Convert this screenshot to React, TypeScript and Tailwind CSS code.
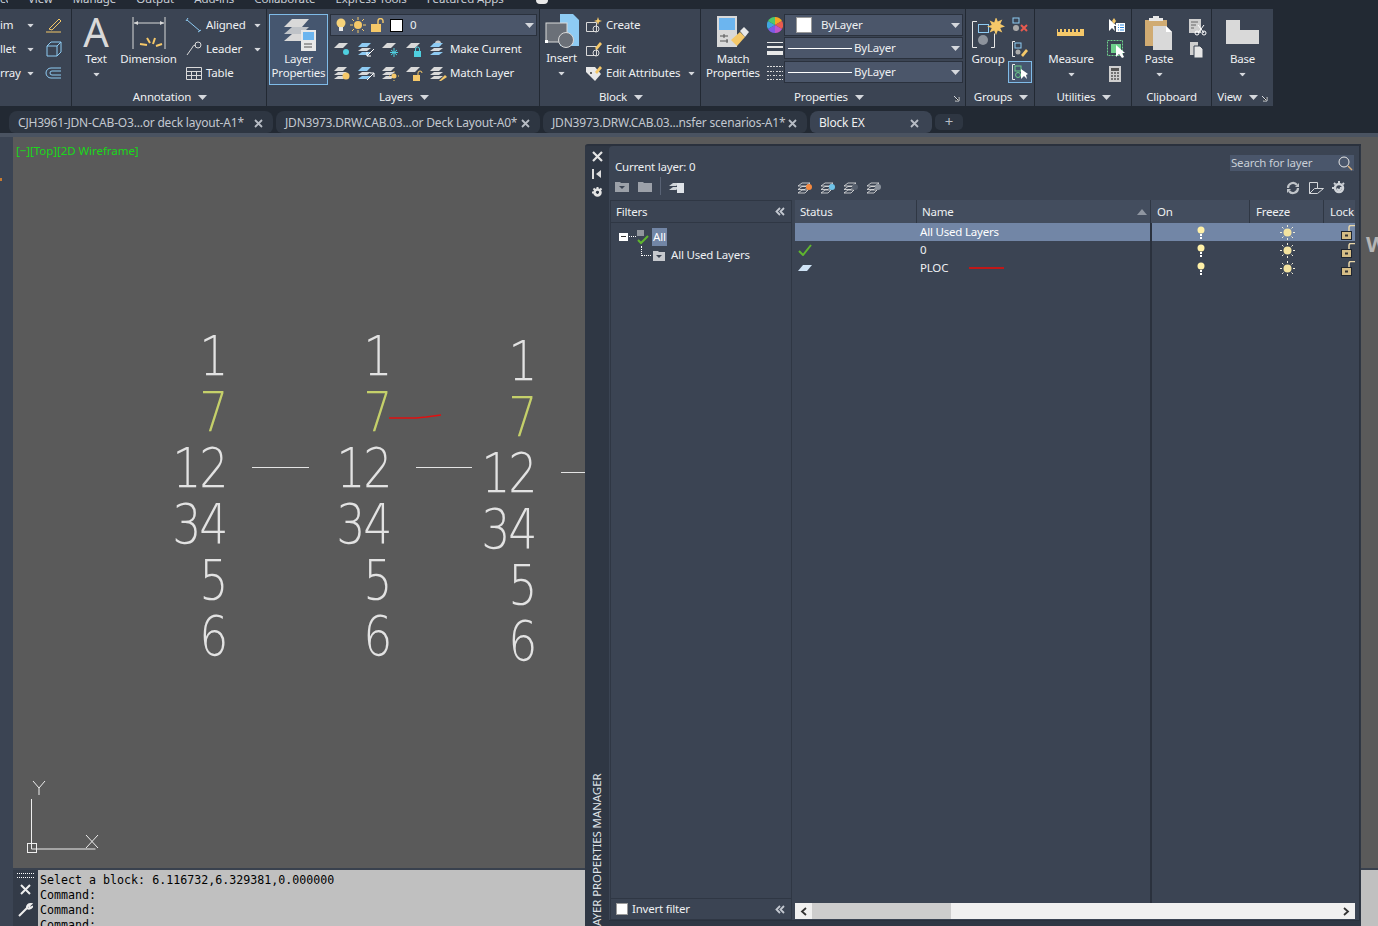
import React from "react";

const Caret = ({ className = "" }: { className?: string }) => (
  <svg width="9" height="5" viewBox="0 0 9 5" className={"shrink-0 " + className}><path d="M0 0h9L4.5 5z" fill="#d5d8dd" /></svg>
);

const Ico = ({ w = 18, h = 18, children, className = "" }: { w?: number; h?: number; children: React.ReactNode; className?: string }) => (
  <svg width={w} height={h} viewBox={`0 0 ${w} ${h}`} className={"shrink-0 " + className} fill="none">{children}</svg>
);

const LayerStack = ({ top = "#d9d9d9", mid = "#d9d9d9" }: { top?: string; mid?: string }) => (
  <>
    <path d="M1 7 5 3h9l-4 4z" fill={top} />
    <path d="M1 11 5 8h9l-4 3z" fill={mid} />
    <path d="M1 15 5 12h9l-4 3z" fill={top} />
  </>
);
const LayerOne = () => <path d="M1 8 6 3h9l-5 5z" fill="#d9d9d9" />;

const Label = ({ children, className = "" }: { children: React.ReactNode; className?: string }) => (
  <span className={"text-[11.5px] tracking-[-0.2px] leading-[14px] text-[#eef0f2] whitespace-nowrap " + className}>{children}</span>
);

const Panel = ({ w, title, tail, titleClass = "pl-[2px]", children }: { w: string; title: React.ReactNode; tail?: boolean; titleClass?: string; children: React.ReactNode }) => (
  <section className={"flex flex-col h-full bg-[#3b4453] shrink-0 " + w}>
    <div className="flex h-[79px] pt-[4px]">{children}</div>
    <div className={"flex-1 flex items-center justify-center gap-[7px] relative " + titleClass}>
      {title}
      {tail && (
        <svg width="7" height="7" viewBox="0 0 7 7" className="absolute right-[5px] top-[7px]"><path d="M1 1l4 4M6 2v4H2" stroke="#d5d8dd" /></svg>
      )}
    </div>
  </section>
);

const Row = ({ children, className = "" }: { children: React.ReactNode; className?: string }) => (
  <div className={"flex items-center h-6 " + className}>{children}</div>
);

const Combo = ({ children, className = "" }: { children: React.ReactNode; className?: string }) => (
  <div className={"flex items-center bg-[#4b566a] border border-[#2a313d] relative " + className}>
    {children}
    <Caret className="absolute right-[2px] top-[8px]" />
  </div>
);

const Bulb = () => (
  <Ico w={10} h={15}><circle cx="5" cy="5" r="4.500" fill="#f6d27a" /><rect x="3" y="9" width="4" height="4" fill="#e8e8e8" /></Ico>
);
const Sun = () => (
  <Ico w={16} h={16}><circle cx="8" cy="8" r="4" fill="#f5c869" /><path d="M8 0v3M8 13v3M0 8h3M13 8h3M2 2l2 2M12 12l2 2M14 2l-2 2M4 12l-2 2" stroke="#f5c869" /></Ico>
);
const OpenLock = () => (
  <Ico w={15} h={14}><rect x="1" y="6" width="10" height="8" fill="#f5c869" /><path d="M8 6V3a2 2 0 0 1 5 0v2" stroke="#f5c869" strokeWidth="1.400" /></Ico>
);

const MenuBar = () => (
  <div className="h-[9px] overflow-hidden bg-[#222933] relative">
    <div className="flex gap-5 -mt-[8px] text-[11.5px] tracking-[-0.1px] leading-[14px] text-[#c9ced6] whitespace-nowrap">
      <span className="w-2 overflow-hidden">ce</span>
      {["View", "Manage", "Output", "Add-ins", "Collaborate", "Express Tools", "Featured Apps"].map((m) => (
        <span key={m}>{m}</span>
      ))}
      <span className="w-[12px] h-[12px] rounded-sm bg-[#e9e9e9] ml-[12px]" />
    </div>
  </div>
);

const Ribbon = () => (
  <div className="flex gap-px h-[97px] w-[1273px]">
    <Panel w="w-[71px]" title={null}>
      <div className="flex flex-col">
        {[
          ["im", "M1 16h15M4 13 14 3l2 2-9 9z", "#f5c869"],
          ["llet", "M2 6h10v10H2zM2 6l4-4h10v10l-4 4M12 6l4-4", "#8ecbf3"],
          ["rray", "M16 4H6a4.500 4.500 0 0 0 0 10h10M16 7H7a2 2 0 0 0 0 4h9", "#8ecbf3"],
        ].map(([t, d, c]) => (
          <Row key={t}>
            <Label className="w-[26px]">{t}</Label>
            <Caret className="scale-75" />
            <Ico className="ml-[10px]"><path d={d} stroke={c} /></Ico>
          </Row>
        ))}
      </div>
    </Panel>

    <Panel w="w-[194px]" title={<><Label>Annotation</Label><Caret /></>}>
      <div className="w-[46px] flex flex-col items-center ml-[1px]">
        <span className="text-[40px] leading-[38px] h-[36px] text-[#d9d9d9] font-['Noto_Sans']">A</span>
        <Label className="mt-[3px]">Text</Label>
        <Caret className="scale-75 mt-[6px]" />
      </div>
      <div className="w-[57px] flex flex-col items-center ml-[1px]">
        <Ico w={34} h={34} className="mt-[4px]">
          <path d="M1 0v32M33 0v32M2 6h30" stroke="#d9d9d9" />
          <path d="M2 6l4-2v4zM32 6l-4-2v4z" fill="#d9d9d9" />
          <path d="M15 28l-7-1M18 26l-3-5M21 27l2-6M24 29l6-2" stroke="#f5c869" strokeWidth="2" />
        </Ico>
        <Label className="mt-[1px]">Dimension</Label>
      </div>
      <div className="flex flex-col ml-[8px]">
        <Row>
          <Ico><path d="M2 4 15 15M1 5l2-3M13 16l3-2" stroke="#8ecbf3" /></Ico>
          <Label className="ml-[3px] w-[47px]">Aligned</Label><Caret className="scale-75" />
        </Row>
        <Row>
          <Ico><path d="M2 15l5-7a4 4 0 0 1 4-3" stroke="#d9d9d9" /><circle cx="13" cy="5" r="3" stroke="#d9d9d9" /></Ico>
          <Label className="ml-[3px] w-[47px]">Leader</Label><Caret className="scale-75" />
        </Row>
        <Row>
          <Ico><path d="M1.500 3.500h15v12h-15zM1.500 7.500h15M1.500 11.500h15M6.500 7v8M11.500 7v8" stroke="#d9d9d9" /></Ico>
          <Label className="ml-[3px]">Table</Label>
        </Row>
      </div>
    </Panel>

    <Panel w="w-[272px]" title={<><Label>Layers</Label><Caret /></>}>
      <div className="ml-[2px] mt-[1px] w-[59px] h-[71px] bg-[#45566f] border border-[#7fbbe8] flex flex-col items-center">
        <Ico w={34} h={34} className="mt-[2px]">
          <path d="M2 10 10 2h17l-7 8z" fill="#d9d9d9" />
          <path d="M2 17l8-7h17l-7 7z" fill="#bfc3c8" />
          <path d="M2 24l8-7h17l-7 7z" fill="#d9d9d9" />
          <rect x="19" y="13" width="15" height="21" fill="#e8e8e8" />
          <rect x="21" y="15" width="11" height="8" fill="#6cb5ef" />
          <path d="M22 27h8M22 30h8" stroke="#555" />
        </Ico>
        <Label className="mt-[1px]">Layer</Label>
        <Label>Properties</Label>
      </div>
      <div className="ml-[2px] flex flex-col">
        <Combo className="w-[207px] h-[22px] mt-[1px] gap-[4px] pl-[5px]">
          <Bulb /><Sun /><OpenLock />
          <span className="w-[13px] h-[13px] bg-white border border-black ml-[1px]" />
          <Label className="ml-[3px]">0</Label>
        </Combo>
        <div className="flex mt-[1px]">
          <div className="flex flex-col">
            <Row className="gap-[6px] pl-[3px]">
              <Ico><LayerOne /><circle cx="13" cy="12" r="3" fill="#4fd0e0" /></Ico>
              <Ico><LayerStack top="#8ecbf3" /><path d="M17 9l-7 7m0-4v4h4" stroke="#fff" /></Ico>
              <Ico><LayerOne /><path d="M13 8v9M9 12.500h8M10 10l6 5M16 10l-6 5" stroke="#4fd0e0" /></Ico>
              <Ico><LayerOne /><rect x="9" y="11" width="7" height="6" fill="#4fd0e0" /><path d="M10.500 11V9a2 2 0 0 1 4 0v2" stroke="#4fd0e0" /></Ico>
            </Row>
            <Row className="gap-[6px] pl-[3px]">
              <Ico><LayerStack /><circle cx="13" cy="12" r="3.500" fill="#f5c869" /></Ico>
              <Ico><LayerStack top="#8ecbf3" /><path d="M10 16l7-7m0 4V9h-4" stroke="#fff" /></Ico>
              <Ico><LayerStack /><circle cx="13" cy="12" r="2.500" fill="#f5c869" /><path d="M13 7v1M13 16v1M8 12h1M17 12h1" stroke="#f5c869" /></Ico>
              <Ico><LayerOne /><rect x="8" y="11" width="7" height="6" fill="#f5c869" /><path d="M13 11V9a2 2 0 0 1 4 0" stroke="#f5c869" /></Ico>
            </Row>
          </div>
          <div className="flex flex-col ml-[6px]">
            <Row>
              <Ico><circle cx="9" cy="3.500" r="3" fill="#c8c8c8" /><LayerStack top="#8ecbf3" /></Ico>
              <Label className="ml-[3px]">Make Current</Label>
            </Row>
            <Row>
              <Ico><LayerStack /><path d="M10 17l6-6 2 2-6 4z" fill="#f5c869" /></Ico>
              <Label className="ml-[3px]">Match Layer</Label>
            </Row>
          </div>
        </div>
      </div>
    </Panel>

    <Panel w="w-[160px]" title={<><Label>Block</Label><Caret /></>}>
      <div className="w-[35px] ml-[4px] flex flex-col items-center">
        <Ico w={34} h={36} className="mt-[1px]">
          <path d="M15 0h13l6 6v26H15z" fill="#8ecbf3" />
          <rect x="1" y="9" width="21" height="19" fill="#6b7078" stroke="#d9d9d9" />
          <circle cx="21" cy="26" r="7.500" fill="#6b7078" stroke="#d9d9d9" />
          <rect x="0" y="26" width="3" height="3" fill="#fff" />
        </Ico>
        <Label className="mt-[1px]">Insert</Label>
        <Caret className="scale-75 mt-[6px]" />
      </div>
      <div className="flex flex-col ml-[6px]">
        <Row>
          <Ico><path d="M1.500 6.500h10v9h-10z" stroke="#d9d9d9" /><circle cx="11" cy="13" r="3" stroke="#d9d9d9" /><path d="M13 1l1 3 3 1-3 1-1 3-1-3-3-1 3-1z" fill="#f5c869" /></Ico>
          <Label className="ml-[3px]">Create</Label>
        </Row>
        <Row>
          <Ico><path d="M1.500 6.500h10v9h-10z" stroke="#d9d9d9" /><circle cx="11" cy="13" r="3" stroke="#d9d9d9" /><path d="M10 8l5-6 2 2-5 6z" fill="#f5c869" /></Ico>
          <Label className="ml-[3px]">Edit</Label>
        </Row>
        <Row>
          <Ico><path d="M1 3h9l6 7-6 7-9-9z" fill="#e8e8e8" /><path d="M10 8l5-6 2 2-5 6z" fill="#f5c869" /><circle cx="6" cy="9" r="1" fill="#333" /></Ico>
          <Label className="ml-[3px] w-[81px]">Edit Attributes</Label><Caret className="scale-75" />
        </Row>
      </div>
    </Panel>

    <Panel w="w-[264px]" tail titleClass="pr-[8px]" title={<><Label>Properties</Label><Caret /></>}>
      <div className="w-[56px] ml-[4px] flex flex-col items-center">
        <Ico w={34} h={35} className="mt-[2px]">
          <rect x="1" y="1" width="20" height="31" fill="#d9d9d9" />
          <rect x="3" y="3" width="16" height="12" fill="#6cb5ef" />
          <path d="M4 21h8M8 19v4M4 26h8M11 24v4" stroke="#555" />
          <path d="M15 25l9-8 5 5-8 9z" fill="#f5c869" />
          <path d="M24 16l4-4 5 5-4 5z" fill="#e8e8e8" />
        </Ico>
        <Label className="mt-[2px]">Match</Label>
        <Label>Properties</Label>
      </div>
      <div className="flex flex-col ml-[3px] w-[21px] items-center">
        <Row className="!h-[24px]">
          <svg width="16" height="16" viewBox="0 0 16 16"><path d="M8 8V0a8 8 0 0 1 7 4z" fill="#f5a623" /><path d="M8 8l7-4a8 8 0 0 1 0 8z" fill="#ea5b4f" /><path d="M8 8l7 4a8 8 0 0 1-7 4z" fill="#c056c9" /><path d="M8 8v8a8 8 0 0 1-7-4z" fill="#7d5be6" /><path d="M8 8l-7 4a8 8 0 0 1 0-8z" fill="#3fa7e0" /><path d="M8 8 1 4a8 8 0 0 1 7-4z" fill="#4cc96b" /></svg>
        </Row>
        <Row><Ico w={16} h={16}><path d="M0 1h16v1H0zM0 5h16v2H0zM0 10h16v4H0z" fill="#e8e8e8" /></Ico></Row>
        <Row><Ico w={16} h={16}><path d="M0 1.500h16M0 6.500h7M9 6.500h7M0 10.500h4M6 10.500h4M12 10.500h4M0 14.500h7M9 14.500h7" stroke="#d9d9d9" strokeDasharray="2 1" /></Ico></Row>
      </div>
      <div className="flex flex-col mt-[1px] gap-[1px] -ml-[1px]">
        <Combo className="w-[179px] h-[22px]">
          <span className="w-[16px] h-[16px] bg-white border border-[#999] ml-[11px]" />
          <Label className="ml-[9px]">ByLayer</Label>
        </Combo>
        <Combo className="w-[179px] h-[22px]">
          <span className="w-[64px] h-px bg-white ml-[3px]" />
          <Label className="ml-[2px]">ByLayer</Label>
        </Combo>
        <Combo className="w-[179px] h-[22px] mt-[1px]">
          <span className="w-[64px] h-px bg-white ml-[3px]" />
          <Label className="ml-[2px]">ByLayer</Label>
        </Combo>
      </div>
    </Panel>

    <Panel w="w-[68px]" title={<><Label>Groups</Label><Caret /></>}>
      <div className="w-[38px] ml-[3px] flex flex-col items-center">
        <Ico w={34} h={30} className="mt-[5px]">
          <path d="M6 3.500H1.500v26H6M20 29.500h3.500v-14" stroke="#e8e8e8" />
          <rect x="7.500" y="6.500" width="10" height="8" stroke="#8ecbf3" />
          <circle cx="12" cy="22" r="5" fill="#8d939c" />
          <path d="M25 -1l1.800 4.500 4.500-2-2 4.500L34 8.500l-4.700 1.500 2 4.500-4.500-2-1.800 4.500-1.800-4.500-4.500 2 2-4.500L16 8.500l4.700-1.500-2-4.500 4.500 2z" fill="#f5c869" />
        </Ico>
        <Label className="mt-[4px]">Group</Label>
      </div>
      <div className="flex flex-col ml-[1px] w-[24px] items-center">
        <Row><Ico w={16} h={16}><rect x="1" y="1" width="6" height="5" stroke="#8ecbf3" /><circle cx="4" cy="11" r="3" fill="#aaa" /><path d="M9 8l6 6M15 8l-6 6" stroke="#e85a4f" strokeWidth="2" /></Ico></Row>
        <Row><Ico w={16} h={16}><path d="M3 .5H.5v15H3" stroke="#e8e8e8" /><rect x="3" y="2" width="6" height="5" stroke="#8ecbf3" /><circle cx="6" cy="11" r="2.500" fill="#aaa" /><path d="M9 14l5-6 2 2-5 6z" fill="#f5c869" /></Ico></Row>
        <div className="w-[24px] h-[22px] border border-[#7fbbe8] bg-[#45566f] flex items-center justify-center">
          <Ico w={16} h={16}><path d="M3 .5H.5v15H3" stroke="#e8e8e8" /><rect x="3" y="2" width="6" height="5" stroke="#6fd08c" /><circle cx="6" cy="11" r="2.500" stroke="#6fd08c" /><path d="M9 5v10l3-3 3 3-1-4 2-1z" fill="#fff" /></Ico>
        </div>
      </div>
    </Panel>

    <Panel w="w-[96px]" title={<><Label>Utilities</Label><Caret /></>}>
      <div className="w-[72px] flex flex-col items-center">
        <Ico w={28} h={34} className="mt-[3px] mb-[2px]">
          <path d="M0 13h1v3h2v-3h2v3h2v-3h2v3h2v-3h2v3h2v-3h2v3h2v-3h2v3h2v-3h4v7H0z" fill="#f5c869" />
        </Ico>
        <Label>Measure</Label>
        <Caret className="scale-75 mt-[6px]" />
      </div>
      <div className="flex flex-col w-[18px]">
        <Row><Ico><path d="M2 3v12l3-3 3 3-1-5h3z" fill="#fff" /><path d="M7 2l2 3-2 3-2-3z" fill="#f5c869" /><rect x="9" y="7" width="9" height="9" fill="#fff" /><path d="M11 9h1M13 9h4M11 11.500h1M13 11.500h4M11 14h1M13 14h4" stroke="#2f88e0" /></Ico></Row>
        <Row><Ico><rect x=".5" y=".5" width="15" height="15" stroke="#6fd08c" strokeDasharray="2 1" /><path d="M4 4h10v9H4z" fill="#6fd08c" /><path d="M9 5v12l3-3 3 4 2-1-2-4h3z" fill="#fff" /></Ico></Row>
        <Row><Ico w={16} h={17}><rect x="2" y="1" width="12" height="16" fill="#cfcfcf" /><rect x="4" y="3" width="8" height="3" fill="#555" /><path d="M4 8h2M7 8h2M10 8h2M4 11h2M7 11h2M10 11h2M4 14h2M7 14h2M10 14h2" stroke="#555" strokeWidth="1.500" /></Ico></Row>
      </div>
    </Panel>

    <Panel w="w-[79px]" titleClass="pr-0" title={<Label>Clipboard</Label>}>
      <div className="w-[54px] flex flex-col items-center">
        <Ico w={28} h={34} className="mt-[3px]">
          <rect x="0" y="4" width="22" height="26" fill="#d0ab72" />
          <rect x="8" y="0" width="6" height="3" fill="#e8e8e8" />
          <rect x="4" y="2" width="14" height="3" fill="#e8e8e8" />
          <path d="M8 10h13l6 6v18H8z" fill="#d9d9d9" />
          <path d="M21 10l6 6h-6z" fill="#fff" />
        </Ico>
        <Label className="mt-[2px]">Paste</Label>
        <Caret className="scale-75 mt-[6px]" />
      </div>
      <div className="flex flex-col ml-[3px]">
        <Row className="!h-[27px]"><Ico><rect x="0" y="1" width="12" height="14" fill="#cfcfcf" /><path d="M2 4h7M2 7h5M2 10h3" stroke="#666" /><path d="M9 7l6 8M15 7l-6 8" stroke="#fff" /><circle cx="8" cy="15" r="2" stroke="#fff" /><circle cx="15" cy="15" r="2" stroke="#fff" /></Ico></Row>
        <Row className="!h-[20px]"><Ico w={16} h={18}><path d="M1 1h8v13H1z" fill="#cfcfcf" /><path d="M5 5h6l3 3v9H5z" fill="#e6e6e6" stroke="#3b4453" /></Ico></Row>
      </div>
    </Panel>

    <Panel w="w-[61px]" tail titleClass="pr-[10px]" title={<><Label>View</Label><Caret /></>}>
      <div className="w-full flex flex-col items-center">
        <Ico w={33} h={34} className="mt-[7px] mb-[-1px]">
          <path d="M0 0h14v10h19v14H0z" fill="#d9d9d9" />
        </Ico>
        <Label className="mt-[-1px]">Base</Label>
        <Caret className="scale-75 mt-[6px]" />
      </div>
    </Panel>
  </div>
);

const Tab = ({ title, w, active }: { title: string; w: string; active?: boolean }) => (
  <div className={"flex items-center h-[22px] rounded-t-[8px] rounded-b-[6px] pl-[9px] justify-between shrink-0 pt-[3px] " + w + " " + (active ? "bg-[#3b4453] text-[#f0f0f0] pr-[13px]" : "bg-[#2e3642] text-[#c3c8d0] pr-[10px]")}>
    <span className="text-[12px] tracking-[-0.2px] whitespace-nowrap">{title}</span>
    <svg width="9" height="9" viewBox="0 0 9 9"><path d="M1 1l7 7M8 1 1 8" stroke="#b7bcc4" strokeWidth="1.800" /></svg>
  </div>
);

const Tabs = () => (
  <div className="flex items-center gap-[3px] h-[27px] pl-[9px] pt-[4px]">
    <Tab title="CJH3961-JDN-CAB-O3...or deck layout-A1*" w="w-[264px]" />
    <Tab title="JDN3973.DRW.CAB.03...or Deck Layout-A0*" w="w-[264px]" />
    <Tab title="JDN3973.DRW.CAB.03...nsfer scenarios-A1*" w="w-[264px]" />
    <Tab title="Block EX" w="w-[122px]" active />
    <div className="w-[28px] h-[16px] rounded-[5px] bg-[#2e3642] flex items-center justify-center text-[#b7bcc4] text-[15px] leading-none">+</div>
  </div>
);

const Digit = ({ d, color = "#e2e2e2" }: { d: string; color?: string }) => (
  <span className="w-[27px] flex justify-center">
    <span className="font-['DejaVu_Sans'] font-extralight text-[56px] leading-[56px] scale-x-[0.82]" style={{ color }}>{d}</span>
  </span>
);

const NumberColumn = ({ className }: { className: string }) => (
  <div className={"absolute flex flex-col items-end w-[60px] " + className}>
    {[["1"], ["7"], ["1", "2"], ["3", "4"], ["5"], ["6"]].map((r, i) => (
      <div key={i} className="flex h-[56px]">
        {r.map((d, j) => <Digit key={j} d={d} color={i === 1 ? "#c5d06a" : undefined} />)}
      </div>
    ))}
  </div>
);

const Canvas = () => (
  <div className="relative flex-1 bg-[#5a5a5a] overflow-hidden">
    <span className="absolute left-[3px] top-[7px] text-[11.5px] tracking-[-0.05px] leading-[14px] text-[#19d819]">[&#8722;][Top][2D Wireframe]</span>
    <NumberColumn className="left-[154px] top-[191px]" />
    <NumberColumn className="left-[318px] top-[191px]" />
    <NumberColumn className="left-[463px] top-[196px]" />
    <svg className="absolute left-0 top-0" width="600" height="735" fill="none">
      <path d="M239 330.500h57M403 330.500h56M548 335.500h24" stroke="#e4e4e4" />
      <path d="M376 281h27l10-1 15-2" stroke="#e01010" strokeWidth="1.500" />
      <path d="M18.500 662v50M18.500 712h64" stroke="#eee" />
      <rect x="14.500" y="706.500" width="9" height="9" stroke="#eee" />
      <path d="M20 644l6 7 6-7M26 651v7M73 698l12 13M85 698l-12 13" stroke="#eee" />
    </svg>
  </div>
);

const CommandLine = () => (
  <div className="flex h-[58px] border-t-2 border-[#39414e] bg-[#333b48]">
    <div className="w-[25px] flex flex-col items-center pt-[3px]">
      <div className="w-[17px] h-[5px] border-y border-dotted border-white" />
      <svg width="11" height="11" viewBox="0 0 11 11" className="mt-[6px]"><path d="M1 1l9 9M10 1l-9 9" stroke="#eee" strokeWidth="2" /></svg>
      <svg width="15" height="15" viewBox="0 0 15 15" className="mt-[7px]" fill="none"><path d="M1 14l8-8M9 6a3.500 3.500 0 0 1 4-4l-2 2 1 2 2-1a3.500 3.500 0 0 1-5 1z" stroke="#eee" strokeWidth="2" /></svg>
    </div>
    <div className="flex-1 bg-[#c0c0c0] pl-[2px] pt-[3px] font-['DejaVu_Sans_Mono','Liberation_Mono',monospace] text-[11.65px] leading-[15px] text-black whitespace-pre">
      <div>Select a block: 6.116732,6.329381,0.000000</div>
      <div>Command:</div>
      <div>Command:</div>
      <div>Command:</div>
    </div>
  </div>
);

const HCell = ({ w, children, className = "" }: { w: string; children?: React.ReactNode; className?: string }) => (
  <div className={"h-full flex items-center pl-[5px] border-r border-[#2f3744] bg-[#434d5e] shrink-0 " + w + " " + className}>
    {children}
  </div>
);

const TableRow = ({ name, selected, status, extra }: { name: string; selected?: boolean; status?: React.ReactNode; extra?: React.ReactNode }) => (
  <div className={"flex h-[18px] items-center " + (selected ? "bg-[#7286a6]" : "")}>
    <div className="w-[125px] pl-[3px] flex items-center shrink-0">{status}</div>
    <div className="w-[230px] flex items-center shrink-0"><Label className={selected ? "text-white" : ""}>{name}</Label>{extra}</div>
    <div className="w-[2px] h-full bg-[#2a313d] shrink-0" />
    <div className="w-[98px] flex justify-center pr-[1px] shrink-0">
      <Ico w={8} h={13}><circle cx="4" cy="4" r="3.500" fill="#fff1a8" /><path d="M4 8v5" stroke="#fff" strokeWidth="2" strokeDasharray="2 1" /></Ico>
    </div>
    <div className="w-[74px] flex justify-center pl-[1px] shrink-0">
      <Ico w={15} h={15}><circle cx="7.500" cy="7.500" r="4" fill="#f3e3a0" /><path d="M7.500 0v2M7.500 13v2M0 7.500h2M13 7.500h2M2 2l1.500 1.500M11.500 11.500 13 13M13 2l-1.500 1.500M3.500 11.500 2 13" stroke="#f0ecd8" /></Ico>
    </div>
    <div className="flex-1 flex justify-end overflow-hidden">
      <Ico w={14} h={15}><rect x="0.500" y="6.500" width="10" height="8" fill="#d5bd86" stroke="#1f2530" /><rect x="4" y="9.500" width="3" height="2" fill="#333" /><path d="M8 6V2.500a2 2 0 0 1 2-2h4" stroke="#e9d6a8" strokeWidth="1.500" /></Ico>
    </div>
  </div>
);

const Palette = () => (
  <div className="absolute left-[585px] top-[144px] w-[776px] h-[790px] flex bg-[#2f3744] rounded-tl-[3px] border-t-2 border-[#2a313d]">
    <div className="w-[24px] shrink-0 relative flex flex-col items-center pt-[5px] gap-[7px]">
      <svg width="11" height="11" viewBox="0 0 11 11"><path d="M1 1l9 9M10 1l-9 9" stroke="#e4e4e4" strokeWidth="2.200" /></svg>
      <svg width="10" height="10" viewBox="0 0 10 10"><path d="M1 0v10" stroke="#ddd" strokeWidth="2" /><path d="M9 1v8L4 5z" fill="#ddd" /></svg>
      <svg width="11" height="11" viewBox="0 0 11 11" className="mt-[1px]" fill="none"><circle cx="5.500" cy="5.500" r="3" stroke="#e4e4e4" strokeWidth="2.500" /><path d="M5.500 0v11M0 5.500h11M1.500 1.500l8 8M9.500 1.500l-8 8" stroke="#e4e4e4" strokeDasharray="2 5" strokeWidth="2" /></svg>
      <span className="absolute left-[4px] top-[628px] [writing-mode:vertical-rl] rotate-180 text-[11.5px] tracking-[-0.1px] leading-[16px] text-[#dfe3e8] whitespace-nowrap h-[158px]">LAYER PROPERTIES MANAGER</span>
    </div>
    <div className="w-[751px] h-[775px] bg-[#3b4453] rounded-tl-[4px] border-b border-r border-[#2a313d] flex flex-col shrink-0">
      <div className="flex h-[54px] shrink-0">
        <div className="w-[186px] flex flex-col pl-[5px] pt-[14px] shrink-0">
          <Label className="ml-[1px]">Current layer: 0</Label>
          <div className="flex items-center mt-[3px]">
            <Ico w={16} h={16}><path d="M1 4h5l1 1h8v9H1z" fill="#9ca1a9" /><path d="M5 8h6L8 11z" fill="#3b4453" /></Ico>
            <Ico w={16} h={16} className="ml-[7px]"><path d="M1 4h5l1 1h8v9H1z" fill="#9ca1a9" /></Ico>
            <span className="w-px h-[18px] bg-[#596375] ml-[7px]" />
            <Ico w={16} h={16} className="ml-[7px]"><path d="M1 8l4-3h7L8 8zM1 12l4-3h7l-4 3z" fill="#cfd3d8" /><rect x="9" y="5" width="7" height="10" fill="#dfe3e8" /></Ico>
          </div>
        </div>
        <div className="flex-1 flex flex-col relative">
          <div className="h-[16px] mt-[9px] w-[124px] self-end mr-[5px] bg-[#4a566b] flex items-center justify-between pl-px pr-[1px]">
            <Label className="!text-[#c8ced6]">Search for layer</Label>
            <svg width="15" height="15" viewBox="0 0 15 15" fill="none"><circle cx="6" cy="6" r="5" stroke="#e8e8e8" /><path d="M10 10l4 4" stroke="#e0b27a" strokeWidth="1.500" /></svg>
          </div>
          <div className="flex items-center justify-between mt-[8px] pr-[13px] pl-[2px] h-[18px]">
            <div className="flex gap-[7px]">
              {["#f5893f", "#6fc3e8", "#555e6c", "#8a919b"].map((c) => (
                <Ico key={c} w={16} h={14}><path d="M1 5 5 2h8L9 5zM1 8.500 5 5.500h6L8 8.500zM1 12 5 9h6l-3 3z" stroke="#e4e4e4" strokeWidth=".8" /><circle cx="12" cy="6" r="3" fill={c} /></Ico>
              ))}
            </div>
            <div className="flex items-center gap-[8px]">
              <Ico w={14} h={14}><path d="M2 7a5 5 0 0 1 9-3M12 7a5 5 0 0 1-9 3" stroke="#bfc3c8" strokeWidth="2.200" /><path d="M9 6h4V2zM5 8H1v4z" fill="#bfc3c8" /></Ico>
              <Ico w={16} h={14}><path d="M1.500 1.500h8v6M1.500 1.500v11h8l6-5h-6M1.500 12.500l5-5h3" stroke="#d4d7db" /></Ico>
              <Ico w={14} h={14}><circle cx="7" cy="7" r="4" stroke="#cfd3d8" strokeWidth="2.500" /><path d="M7 0v14M0 7h14M2 2l10 10M12 2 2 12" stroke="#cfd3d8" strokeWidth="2" strokeDasharray="2 5.900" /></Ico>
            </div>
          </div>
        </div>
      </div>

      <div className="flex flex-1 min-h-0">
        <div className="w-[182px] ml-px border-x border-b border-[#2f3744] flex flex-col shrink-0">
          <div className="h-[23px] border-b border-[#2f3744] flex items-center pl-[5px] pr-[6px] justify-between shrink-0 border-t">
            <Label>Filters</Label>
            <svg width="10" height="9" viewBox="0 0 10 9" fill="none"><path d="M5 1 1.500 4.500 5 8M9 1 5.500 4.500 9 8" stroke="#c3c8d0" strokeWidth="1.800" /></svg>
          </div>
          <div className="flex-1 pl-[8px] pt-[4px]">
            <div className="flex items-center h-[19px]">
              <span className="w-[9px] h-[8px] bg-white flex items-center justify-center"><span className="w-[5px] h-px bg-[#333]" /></span>
              <span className="w-[7px] border-t border-dotted border-white ml-px" />
              <Ico w={15} h={16}><path d="M1 2h7M1 4h7M1 6h7" stroke="#e8e8e8" /><path d="M2 11l3 3 7-7" stroke="#5fb52f" strokeWidth="2" /></Ico>
              <span className="bg-[#7286a6] h-[18px] px-[1px] ml-[1px] flex items-center"><Label className="text-white">All</Label></span>
            </div>
            <div className="flex items-center h-[18px] pl-[22px]">
              <span className="w-[10px] h-[10px] border-l border-b border-dotted border-white -mt-[8px]" />
              <Ico w={14} h={14} className="ml-px"><path d="M1 3h5l1 1h6v9H1z" fill="#c6c9ce" /><path d="M4 7h6L7 10z" fill="#3b4453" /></Ico>
              <Label className="ml-[5px]">All Used Layers</Label>
            </div>
          </div>
          <div className="h-[21px] border-t border-[#2f3744] flex items-center pl-[5px] pr-[6px] shrink-0 justify-between">
            <div className="flex items-center">
              <span className="w-[12px] h-[12px] bg-white border border-[#999]" />
              <Label className="ml-[4px]">Invert filter</Label>
            </div>
            <svg width="10" height="9" viewBox="0 0 10 9" fill="none"><path d="M5 1 1.500 4.500 5 8M9 1 5.500 4.500 9 8" stroke="#c3c8d0" strokeWidth="1.800" /></svg>
          </div>
        </div>

        <div className="w-[560px] ml-[3px] flex flex-col shrink-0 pb-[1px]">
          <div className="flex h-[23px] shrink-0">
            <HCell w="w-[122px]"><Label>Status</Label></HCell>
            <HCell w="w-[234px]" className="relative">
              <Label>Name</Label>
              <svg width="10" height="6" viewBox="0 0 10 6" className="absolute right-[3px] top-[9px]"><path d="M0 6h10L5 0z" fill="#8f96a1" /></svg>
            </HCell>
            <HCell w="w-[99px]" className="!pl-[6px]"><Label>On</Label></HCell>
            <HCell w="w-[74px]" className="!pl-[6px]"><Label>Freeze</Label></HCell>
            <HCell w="w-[31px]" className="!border-r-0 !pl-[6px]"><Label>Lock</Label></HCell>
          </div>
          <TableRow name="All Used Layers" selected />
          <TableRow name="0" status={<svg width="14" height="12" viewBox="0 0 14 12"><path d="M1 7l4 4 8-10" stroke="#5fb52f" strokeWidth="2" fill="none" /></svg>} />
          <TableRow
            name="PLOC"
            status={<svg width="14" height="8" viewBox="0 0 14 8"><path d="M0 7l5-6h9L9 7z" fill="#cfe3f5" /></svg>}
            extra={<span className="w-[35px] h-[2px] bg-[#c01818] ml-[21px]" />}
          />
          <div className="flex-1 flex">
            <div className="w-[355px]" />
            <div className="w-[2px] bg-[#2a313d]" />
          </div>
          <div className="h-[16px] bg-[#f0f0f0] flex items-center shrink-0">
            <span className="w-[17px] flex justify-center"><svg width="7" height="9" viewBox="0 0 7 9"><path d="M6 1 2 4.500 6 8" stroke="#333" strokeWidth="1.800" fill="none" /></svg></span>
            <span className="w-[139px] h-full bg-[#cdcdcd]" />
            <span className="flex-1 flex justify-end pr-[5px]"><svg width="7" height="9" viewBox="0 0 7 9"><path d="M1 1l4 3.500L1 8" stroke="#333" strokeWidth="1.800" fill="none" /></svg></span>
          </div>
        </div>
      </div>
    </div>
  </div>
);

export default function App() {
  return (
    <div className="relative w-[1378px] h-[926px] overflow-hidden bg-[#222933] font-['Noto_Sans',sans-serif]">
      <MenuBar />
      <Ribbon />
      <Tabs />
      <div className="h-[4px] bg-[#4a5361]" />
      <div className="flex h-[789px]">
        <div className="w-[13px] bg-[#3b4453] shrink-0 relative">
          <span className="absolute left-0 top-[41px] w-[2px] h-[3px] bg-[#c87a30]" />
        </div>
        <div className="flex-1 flex flex-col min-w-0">
          <Canvas />
          <CommandLine />
        </div>
      </div>
      <Palette />
      <span className="absolute left-[1366px] top-[230px] text-[22px] leading-[26px] font-bold text-[#b5b5b5]">W</span>
    </div>
  );
}
